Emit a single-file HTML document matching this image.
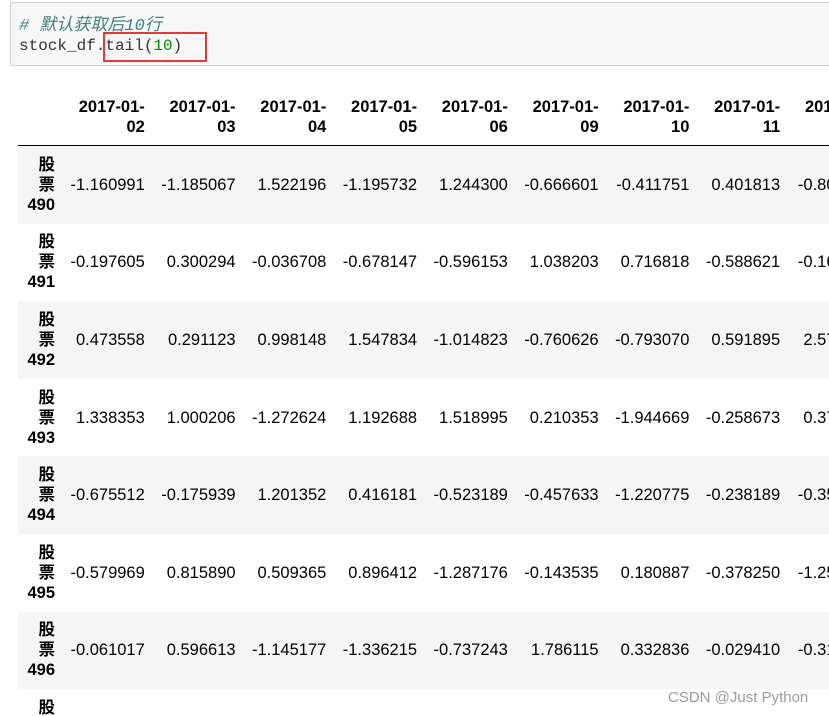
<!DOCTYPE html>
<html><head><meta charset="utf-8"><style>
html,body{margin:0;width:829px;height:716px;overflow:hidden;background:#fff;}
body{font-family:"Liberation Sans","Noto Sans CJK SC",sans-serif;}
.wrap{position:relative;width:829px;height:716px;overflow:hidden;}
.code{position:absolute;left:10px;top:2px;width:830px;height:62px;background:#f7f7f7;border:1px solid #cfcfcf;border-radius:2px;font-family:"Liberation Mono","Noto Sans CJK SC",monospace;font-size:16px;}
.c1{position:absolute;left:8px;top:7px;color:#408080;font-style:italic;font-size:17px;}
.c2{position:absolute;left:8px;top:34px;color:#333;}
.red{position:absolute;left:92px;top:29px;width:100px;height:26px;border:2px solid #e53935;}
table{position:absolute;left:18px;top:88px;width:859px;border-collapse:collapse;table-layout:fixed;font-size:16.5px;color:#000;}
th{font-weight:bold;text-align:right;vertical-align:bottom;padding:0 6px 8px 0;height:49px;line-height:20px;border-bottom:1px solid #000;white-space:nowrap;overflow:hidden;}
td{text-align:right;padding:0 6px 0 0;height:77.6px;white-space:nowrap;overflow:hidden;line-height:20px;}
td.i{font-weight:bold;padding-right:5px;}
tr.g td{background:#f5f5f5;}
.wm{position:absolute;left:668px;top:689px;color:#9a9a9a;font-size:15px;}
</style></head><body><div class="wrap">
<div class="code"><div class="c1"># 默认获取后10行</div><div class="c2">stock_df.tail(<span style="color:#080">10</span>)</div><div class="red"></div></div>
<table>
<colgroup><col style="width:42px"><col style="width:90.7px"><col style="width:90.7px"><col style="width:90.7px"><col style="width:90.7px"><col style="width:90.7px"><col style="width:90.7px"><col style="width:90.7px"><col style="width:90.7px"><col style="width:90.7px"></colgroup>
<tr><th style="padding-right:5px"></th><th>2017-01-<br>02</th><th>2017-01-<br>03</th><th>2017-01-<br>04</th><th>2017-01-<br>05</th><th>2017-01-<br>06</th><th>2017-01-<br>09</th><th>2017-01-<br>10</th><th>2017-01-<br>11</th><th>2017-01-<br>12</th></tr>
<tr class="g"><td class="i">股<br>票<br>490</td><td>-1.160991</td><td>-1.185067</td><td>1.522196</td><td>-1.195732</td><td>1.244300</td><td>-0.666601</td><td>-0.411751</td><td>0.401813</td><td>-0.802311</td></tr>
<tr><td class="i">股<br>票<br>491</td><td>-0.197605</td><td>0.300294</td><td>-0.036708</td><td>-0.678147</td><td>-0.596153</td><td>1.038203</td><td>0.716818</td><td>-0.588621</td><td>-0.162311</td></tr>
<tr class="g"><td class="i">股<br>票<br>492</td><td>0.473558</td><td>0.291123</td><td>0.998148</td><td>1.547834</td><td>-1.014823</td><td>-0.760626</td><td>-0.793070</td><td>0.591895</td><td>2.572311</td></tr>
<tr><td class="i">股<br>票<br>493</td><td>1.338353</td><td>1.000206</td><td>-1.272624</td><td>1.192688</td><td>1.518995</td><td>0.210353</td><td>-1.944669</td><td>-0.258673</td><td>0.372311</td></tr>
<tr class="g"><td class="i">股<br>票<br>494</td><td>-0.675512</td><td>-0.175939</td><td>1.201352</td><td>0.416181</td><td>-0.523189</td><td>-0.457633</td><td>-1.220775</td><td>-0.238189</td><td>-0.352311</td></tr>
<tr><td class="i">股<br>票<br>495</td><td>-0.579969</td><td>0.815890</td><td>0.509365</td><td>0.896412</td><td>-1.287176</td><td>-0.143535</td><td>0.180887</td><td>-0.378250</td><td>-1.252311</td></tr>
<tr class="g"><td class="i">股<br>票<br>496</td><td>-0.061017</td><td>0.596613</td><td>-1.145177</td><td>-1.336215</td><td>-0.737243</td><td>1.786115</td><td>0.332836</td><td>-0.029410</td><td>-0.312311</td></tr>
<tr><td class="i">股<br>票<br>497</td><td></td><td></td><td></td><td></td><td></td><td></td><td></td><td></td><td></td></tr>
</table>
<div class="wm">CSDN @Just Python</div>
</div></body></html>
